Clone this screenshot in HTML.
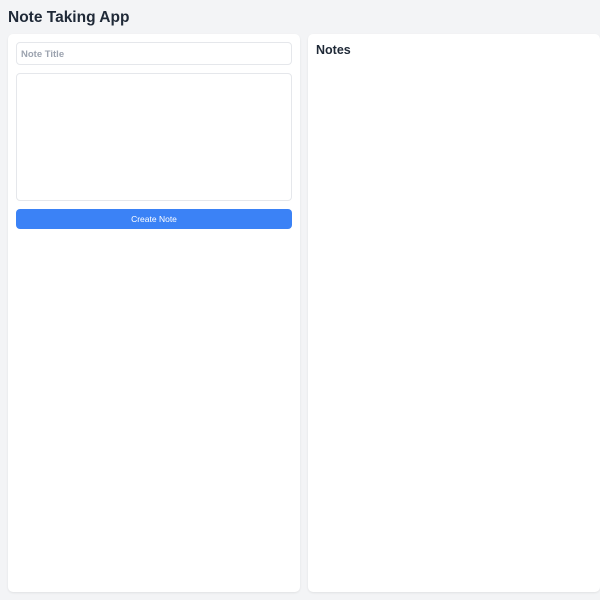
<!DOCTYPE html>
<html><head><style>
*{box-sizing:border-box;margin:0;padding:0}
body{width:600px;height:600px;background:#f3f4f6;font-family:"Liberation Sans",sans-serif;position:relative;overflow:hidden;color:#1f2937}
h1{position:absolute;left:8px;top:8px;font-size:15.5px;font-weight:bold;line-height:20px}
.panel{position:absolute;top:34px;height:558px;width:292px;background:#fff;border-radius:5px;box-shadow:0 1px 2px rgba(0,0,0,.08)}
.l{left:8px}.r{left:308px}
.inp{position:absolute;left:8px;width:276px;border:1px solid #e5e7eb;border-radius:4px;background:#fff}
.t{top:8px;height:23px;font-size:9.5px;color:#9ca3af;font-weight:bold;padding:6px 4px}
.a{top:39px;height:128px}
.btn{position:absolute;left:8px;top:175px;width:276px;height:20px;background:#3b82f6;border-radius:4px;color:#fff;font-size:8.5px;text-align:center;line-height:20px}
h2{position:absolute;left:8px;top:9px;font-size:12.5px;font-weight:bold}
</style></head><body>
<h1>Note Taking App</h1>
<div class="panel l">
<div class="inp t">Note Title</div>
<div class="inp a"></div>
<div class="btn">Create Note</div>
</div>
<div class="panel r"><h2>Notes</h2></div>
</body></html>
